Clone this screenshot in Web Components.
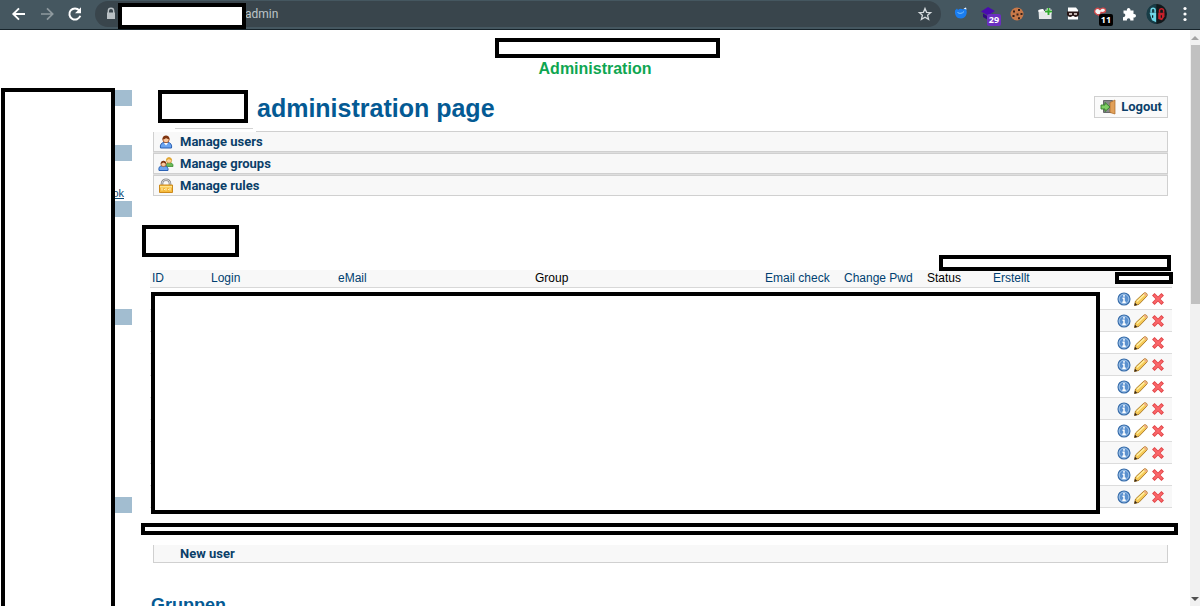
<!DOCTYPE html>
<html lang="en">
<head>
<meta charset="utf-8">
<title>Administration</title>
<style>
  html, body { margin: 0; height: 100%; overflow: hidden; background: #fff; }
  body { font: 12px/16px "Liberation Sans", Arial, sans-serif; color: #111; }
</style>
</head>
<body>
<admin-app></admin-app>

<script>
const define = (name, html, setup) => {
  const template = document.createElement('template');
  template.innerHTML = html;
  customElements.define(name, class extends HTMLElement {
    constructor() {
      super();
      this.attachShadow({ mode: 'open' }).append(template.content.cloneNode(true));
    }
    connectedCallback() { if (setup) setup(this, this.shadowRoot); }
  });
};

const icons = {
  back: '<path d="M14 8H2.500M8 2.300 2.300 8 8 13.700" fill="none" stroke="#fff" stroke-width="1.900"/>',
  forward: '<path d="M2 8h11.500M8 2.300 13.700 8 8 13.700" fill="none" stroke="#8f9a9f" stroke-width="1.700"/>',
  reload: '<path d="M13.300 9.800A5.600 5.600 0 1 1 12.300 4.400" fill="none" stroke="#fff" stroke-width="2"/><path d="M14 1.300v6H8z" fill="#fff"/>',
  padlock: '<path d="M5.300 7V5a2.700 2.700 0 0 1 5.400 0v2" fill="none" stroke="#b9c0c4" stroke-width="1.400"/><path d="M4 6.500h8V13H4z" fill="#b9c0c4"/>',
  star: '<path d="m8 2.500 1.600 3.800 4.100.3-3.100 2.700 1 4L8 11.200l-3.600 2.100 1-4L2.300 6.600l4.100-.3z" fill="none" stroke="#d5dadd" stroke-width="1.300"/>',
  swirl: '<path d="M2 4.500 4 2.500l1 1.500c1.500-1.500 3.500-1.500 5-.5l3-2 .5 3c1 3-1 8-5.500 8S1.500 9 2 4.500z" fill="#1a7df0"/><path d="M4.500 6.500c2 1.500 5 1 6.500-1" stroke="#7ec3ff" fill="none"/><path d="M10.500 2.500 13 1.500l.5 2z" fill="#fff"/>',
  layers: '<path d="m7 1 7 4-7 4.500L0 5.500z" fill="#4a0bb0"/><path d="M2 7.500V11l5 3 5-3V7.500L7 10.500z" fill="#310a80"/>',
  cookie: '<circle cx="8" cy="8" r="6.500" fill="#c87848"/><path d="M4 4.500h2v2H4zM9 3h2v2H9zM7.500 7.500h2v2h-2zM3.500 9h2v2h-2zM11.500 7h2v2h-2zM9 11.300h2v2H9z" fill="#35201a"/>',
  foldernew: '<path d="M1.500 4 6 3l1 2h7.500v8H2z" fill="#e4e7e8"/><path d="M1.500 4 6 3l1 2-5.500 1z" fill="#fff"/><path d="M11.500 2v7M8 5.500h7" stroke="#fff" stroke-width="3.500"/><path d="M11.500 2v7M8 5.500h7" stroke="#31a82e" stroke-width="2"/>',
  mask: '<path d="M3 1.500h8l2 2.500v9.500H3z" fill="#fff"/><path d="M2 5.500h12V9c-1.500 2.500-4.500 2.300-6 .8C6.500 11.300 3.500 11.500 2 9z" fill="#291717"/><path d="M4 7.300h3v1.500H4zm5 0h3v1.500H9z" fill="#f5e9e5"/>',
  lips: '<path d="M2 4c2-3 4-1.500 5-.5C9 1 13 2 12.500 5 12 7 9 6.500 8 6.500c0 2-2 3-4 2S1 6 2 4z" fill="#f5f5f5" stroke="#d0494b" stroke-width="1.300"/><path d="m5 8.500 3 3" stroke="#d0494b" stroke-width="1.500"/>',
  puzzle: '<path d="M2.500 4.500H6C5 1 10 1 9.500 4.500h3V8c3.300-.7 3.300 4.200 0 3.500v3H9.300c.5-3-3.800-3-3.400 0H2v-3.400c3 .5 3-4 .5-3.500z" fill="#fff"/>',
  avatar: '<circle cx="8" cy="8" r="8" fill="#11191c"/><path d="M7.500 0a8 8 0 0 0 0 16z" fill="#173c46"/><path d="M3.300 7V5a1.600 1.600 0 0 1 3.200 0v2" stroke-width="1.200" fill="none" stroke="#70d7e8"/><path d="M2 7h5.300v7.500L4 13z" fill="#70d7e8"/><path d="M9 7h5v3l-2 3-3-1z" fill="#c7202a"/><path d="M10 7V5a1.700 1.700 0 0 1 3.300 0v2" stroke-width="1.200" fill="none" stroke="#c7202a"/><path d="M4.500 9v2M11.500 9v2" stroke="#12181b"/>',
  dots: '<g fill="#fff"><circle cx="8" cy="2.500" r="1.600"/><circle cx="8" cy="8" r="1.600"/><circle cx="8" cy="13.500" r="1.600"/></g>',
  user: '<path d="M2.500 14c-.8-3 1-5.500 3.500-5.500h4c2.500 0 4.300 2.500 3.500 5.500z" fill="#6ba4f0" stroke="#2a61b4"/><path d="m6 9 2 2.500L10 9z" fill="#fff"/><circle cx="8" cy="5.500" r="3.200" fill="#fbc9a0" stroke="#9a4a1e" stroke-width=".8"/><path d="M4.500 5.500C4 0 12 0 11.500 5.500 9 5 8 4 8 4S7 5.500 4.500 5.500z" fill="#7f3510"/>',
  group: '<path d="M8.500 10.500c-.5-2.500.5-4 2.500-4s4.500 1 4 4z" fill="#69b957" stroke="#3b8a32" stroke-width=".8"/><circle cx="11" cy="4.500" r="2.600" fill="#fbd09a" stroke="#c58a22" stroke-width=".7"/><path d="M8 4.500C8 0 14 0 14 4.500 12 4 11 3 11 3z" fill="#e2a833"/><path d="M1 14.500c-.5-3 .5-4.500 2.500-4.500h3c2.500 0 4 2 3.500 4.500z" fill="#6ba4f0" stroke="#2a61b4"/><circle cx="5.500" cy="8" r="2.600" fill="#fbc9a0" stroke="#9a4a1e" stroke-width=".7"/><path d="M2.700 8C2.500 3.500 8.500 3.500 8.300 8 7 7.500 5.500 6.500 5.500 6.500z" fill="#7f3510"/>',
  lock: '<path d="M4 8V5.500C4 .5 12 .5 12 5.500V8" fill="none" stroke="#888" stroke-width="2.600"/><path d="M4 8V5.500C4 .5 12 .5 12 5.500V8" fill="none" stroke="#ddd"/><path d="M1.500 7h13v7.500h-13z" fill="#f6ba3c" stroke="#cc8a1c"/><path d="M2 8h12v1.500H2z" fill="#ffe48b"/><path d="M4 10v2.500M8 10v2.500M12 10v2.500M6 11.500h1M10 11.500h1" stroke="#fff1c0"/>',
  door: '<path d="M3.500 1.500h9v12h-9z" fill="#88888b" stroke="#66686b"/><path d="M10 3.500 15 1v14l-5-1.500z" fill="#e1a059" stroke="#aa6826" stroke-width=".7"/><path d="M1 6h4V3.500L10 8l-5 4.500V10H1z" fill="#7fce65" stroke="#347e2b" stroke-width=".9"/>',
  info: '<circle cx="8" cy="8" r="6" fill="#5b91cf" stroke="#376ca9" stroke-width="1.100"/><circle cx="8" cy="8" r="4.800" fill="none" stroke="#a9caec" stroke-width=".9"/><path d="M8 4v1.700M6.500 7.200H8V11M6.300 11.300h3.500" stroke="#fff" stroke-width="1.500" fill="none"/>',
  pencil: '<path d="m1.500 14.500 1-4.500 8.500-8c1.500-1 4 .8 3 3L6 13.300z" fill="#f5c957" stroke="#a8741b" stroke-width=".9"/><path d="m4 10.500 7.500-7" stroke="#fff0a4" stroke-width="1.500"/><path d="m10.500 2.500 3 3 .8-1.500L12 1.500z" fill="#efab87"/><path d="m1.300 14.700.7-3 2.300 2.200z" fill="#302620"/>',
  cross: '<path d="m3.300 3.300 9.400 9.400M12.700 3.300l-9.400 9.400" stroke="#e04447" stroke-width="3.600"/><path d="m4 4 8 8M12 4l-8 8" stroke="#fb6669" stroke-width="2"/>'
};

define('ui-icon', `
  <style>
    :host { display: block; flex: none; width: 16px; height: 16px; }
    svg { display: block; width: 100%; height: 100%; overflow: visible; }
  </style>
  <svg viewBox="0 0 16 16" aria-hidden="true"></svg>`,
  (el, root) => { root.querySelector('svg').innerHTML = icons[el.getAttribute('name')] || ''; });

define('redacted-box', `
  <style>
    :host { display: block; box-sizing: border-box; flex: none; background: #fff; border: 4px solid #000; }
  </style>`);

define('browser-bar', `
  <style>
    :host { display: flex; align-items: center; box-sizing: border-box; height: 30px; padding: 0 1px 2px 5px; background: #455760; border-bottom: 1px solid #17242b; position: relative; }
    button { display: grid; place-items: center; flex: none; width: 28px; height: 28px; padding: 0; border: 0; background: none; position: relative; }
    .avatar ui-icon { width: 20px; height: 20px; }
    .address { display: flex; align-items: center; flex: 1; height: 26px; margin: 0 6px; background: #39454c; border-radius: 13px; box-sizing: border-box; padding: 0 2px 0 8px; }
    input { flex: 1; min-width: 0; height: 24px; box-sizing: border-box; padding: 0 0 0 126px; border: 0; outline: 0; background: none; font: 12px/16px Roboto, sans-serif; color: #bdc5c9; }
    redacted-box { position: absolute; left: 118px; top: 3px; width: 128px; height: 26px; }
    .badge { position: absolute; left: 12px; top: 14px; width: 14px; height: 12px; background: #6b2fc0; border-radius: 2px; font: bold 9px/12px "Open Sans", sans-serif; color: #fff; text-align: center; }
    .dark { background: #000; }
  </style>
  <button aria-label="Back"><ui-icon name="back"></ui-icon></button>
  <button aria-label="Forward"><ui-icon name="forward"></ui-icon></button>
  <button aria-label="Reload"><ui-icon name="reload"></ui-icon></button>
  <div class="address">
    <ui-icon name="padlock"></ui-icon>
    <input aria-label="Address" value="admin">
    <button aria-label="Bookmark"><ui-icon name="star"></ui-icon></button>
  </div>
  <button aria-label="Swirl"><ui-icon name="swirl"></ui-icon></button>
  <button aria-label="Layers"><ui-icon name="layers"></ui-icon><span class="badge">29</span></button>
  <button aria-label="Cookies"><ui-icon name="cookie"></ui-icon></button>
  <button aria-label="Folder"><ui-icon name="foldernew"></ui-icon></button>
  <button aria-label="Mask"><ui-icon name="mask"></ui-icon></button>
  <button aria-label="Capture"><ui-icon name="lips"></ui-icon><span class="badge dark">11</span></button>
  <button aria-label="Extensions"><ui-icon name="puzzle"></ui-icon></button>
  <button aria-label="Profile" class="avatar"><ui-icon name="avatar"></ui-icon></button>
  <button aria-label="Menu"><ui-icon name="dots"></ui-icon></button>
  <redacted-box></redacted-box>`);

define('scroll-rail', `
  <style>
    :host { display: flex; flex-direction: column; flex: none; width: 10px; background: #f1f1f1; }
    .arrow { flex: none; height: 15px; display: grid; place-items: center; }
    .arrow svg { width: 8px; height: 4px; }
    .track { flex: 1; }
    .thumb { height: 47.500%; background: #c1c1c1; margin-left: 1px; }
  </style>
  <div class="arrow"><svg viewBox="0 0 8 4"><path d="M0 4 4 0l4 4z" fill="#a3a3a3"/></svg></div>
  <div class="track"><div class="thumb"></div></div>
  <div class="arrow"><svg viewBox="0 0 8 4"><path d="M0 0h8L4 4z" fill="#505050"/></svg></div>`);

define('side-nav', `
  <style>
    :host { display: block; flex: none; box-sizing: border-box; width: 134px; padding: 10px 2px 0 8px; position: relative; }
    section { box-sizing: border-box; min-height: 55px; }
    section:nth-of-type(2) { min-height: 56px; }
    section:nth-of-type(3) { min-height: 108px; }
    section:nth-of-type(4) { min-height: 188px; }
    .bar { height: 16px; background: #a2bdd0; }
    a { display: block; padding: 24px 8px 0 0; text-align: right; font-size: 11px; line-height: 16px; color: #0b4a78; text-decoration: underline; }
    redacted-box { position: absolute; left: 1px; top: 8px; bottom: -4px; width: 114px; }
  </style>
  <section><div class="bar"></div></section>
  <section><div class="bar"></div><a href="#">ok</a></section>
  <section><div class="bar"></div></section>
  <section><div class="bar"></div></section>
  <section><div class="bar"></div></section>
  <redacted-box></redacted-box>`);

define('menu-item', `
  <style>
    :host { display: block; box-sizing: border-box; height: 21px; border: 1px solid #d0d0d0; background: #f8f8f8; }
    a { display: flex; align-items: center; gap: 6px; height: 100%; padding-left: 4px; font: bold 13px/16px Roboto, sans-serif; color: #0b3f69; text-decoration: none; }
  </style>
  <a href="#"><ui-icon></ui-icon><span><slot></slot></span></a>`,
  (el, root) => {
    const icon = root.querySelector('ui-icon');
    if (el.hasAttribute('icon')) icon.replaceWith(Object.assign(document.createElement('template'), { innerHTML: `<ui-icon name="${el.getAttribute('icon')}"></ui-icon>` }).content);
  });

define('user-table', `
  <style>
    :host { display: block; position: relative; }
    table { width: 100%; table-layout: fixed; border-collapse: separate; border-spacing: 0; }
    th { height: 17px; padding: 0 0 0 2px; text-align: left; font-size: 12px; line-height: 17px; font-weight: normal; white-space: nowrap; background: #f8f8f8; border-bottom: 1px solid #d8d8d8; color: #000; }
    th a { color: #003f70; text-decoration: none; }
    td { height: 21px; padding: 0; border-bottom: 1px solid #dcdcdc; }
    tr:nth-child(even) td { background: #f8f8f8; }
    .tools { display: flex; justify-content: center; gap: 1px; padding-left: 8px; }
    .tools button { padding: 0; border: 0; background: none; }
    .rows { position: absolute; left: 1px; right: 72px; top: 22px; bottom: -6px; }
    .filter { position: absolute; right: 1px; top: -15px; width: 232px; height: 16px; }
    .head { position: absolute; right: -1px; top: 2px; width: 58px; height: 12px; }
  </style>
  <table>
    <colgroup><col style="width:59px"><col style="width:127px"><col style="width:197px"><col><col style="width:79px"><col style="width:83px"><col style="width:66px"><col style="width:110px"><col style="width:71px"></colgroup>
    <thead><tr>
      <th><a href="#">ID</a></th><th><a href="#">Login</a></th><th><a href="#">eMail</a></th><th>Group</th>
      <th><a href="#">Email check</a></th><th><a href="#">Change Pwd</a></th><th>Status</th><th><a href="#">Erstellt</a></th><th></th>
    </tr></thead>
    <tbody></tbody>
  </table>
  <redacted-box class="rows"></redacted-box>
  <redacted-box class="filter"></redacted-box>
  <redacted-box class="head"></redacted-box>`,
  (el, root) => {
    const tool = (name, label) => `<button aria-label="${label}"><ui-icon name="${name}"></ui-icon></button>`;
    root.querySelector('tbody').innerHTML = Array(10).fill(
      `<tr>${'<td></td>'.repeat(8)}<td><div class="tools">${tool('info', 'Info')}${tool('pencil', 'Edit')}${tool('cross', 'Delete')}</div></td></tr>`).join('');
  });

define('admin-main', `
  <style>
    :host { display: block; flex: 1; min-width: 0; padding: 8px 18px 0 16px; }
    .title { display: flex; justify-content: space-between; align-items: center; height: 37px; margin: 0 4px 6px 8px; }
    h1 { display: flex; align-items: flex-end; gap: 9px; margin: 0; font-size: 25px; line-height: 30px; color: #045a94; white-space: nowrap; }
    h1 redacted-box { width: 90px; height: 33px; }
    .logout { display: flex; align-items: center; gap: 5px; box-sizing: border-box; height: 22px; padding: 0 5px; border: 1px solid #d0d0d0; background: #fafafa; font: bold 13px/16px Roboto, sans-serif; color: #0b3f69; }
    nav { display: grid; gap: 1px; margin: 0 4px 0 3px; background: #dedede; position: relative; }
    .smudge { position: absolute; left: -3px; top: -4px; width: 106px; height: 5px; background: #fff; }
    .smudge::before { content: ""; position: absolute; left: 25px; top: 1px; width: 78px; height: 1px; background: #d4d4d4; }
    .section { width: 97px; height: 32px; margin: 29px 0 13px -8px; }
    .pager { height: 12px; margin: 15px -6px 10px -9px; }
    .new { margin: 0 4px 0 3px; height: 18px; border-top: 0; }
    h2 { margin: 30px 0 0 1px; font-size: 18px; line-height: 24px; color: #045a94; }
  </style>
  <div class="title">
    <h1><redacted-box></redacted-box>administration page</h1>
    <button class="logout"><ui-icon name="door"></ui-icon>Logout</button>
  </div>
  <nav>
    <menu-item icon="user">Manage users</menu-item>
    <menu-item icon="group">Manage groups</menu-item>
    <menu-item icon="lock">Manage rules</menu-item>
    <div class="smudge"></div>
  </nav>
  <redacted-box class="section"></redacted-box>
  <user-table></user-table>
  <redacted-box class="pager"></redacted-box>
  <menu-item class="new">New user</menu-item>
  <h2>Gruppen</h2>`);

define('admin-app', `
  <style>
    :host { display: flex; flex-direction: column; height: 100vh; }
    .window { display: flex; flex: 1; min-height: 0; }
    .page { display: flex; flex-direction: column; flex: 1; min-width: 0; overflow: hidden; }
    header { display: grid; justify-items: center; padding-top: 8px; }
    header div { padding-left: 25px; }
    header redacted-box { width: 225px; height: 20px; }
    header strong { font-size: 16px; line-height: 22px; color: #0ea651; }
    .columns { display: flex; flex: 1; min-height: 0; }
  </style>
  <browser-bar></browser-bar>
  <div class="window">
    <div class="page">
      <header><div><redacted-box></redacted-box></div><strong>Administration</strong></header>
      <div class="columns"><side-nav></side-nav><admin-main></admin-main></div>
    </div>
    <scroll-rail></scroll-rail>
  </div>`);
</script>
</body>
</html>
